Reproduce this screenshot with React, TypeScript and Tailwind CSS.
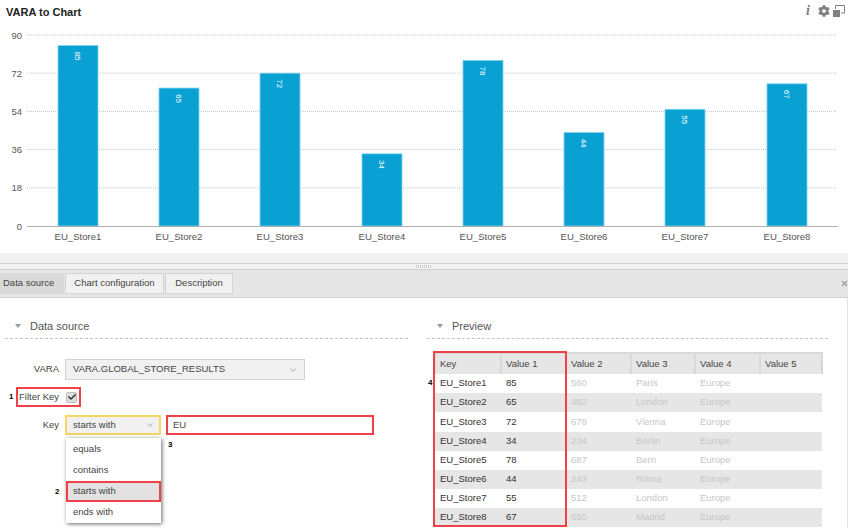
import React from 'react';
import { FaCog, FaCheck } from 'react-icons/fa';
import { ChevronDown, X } from 'lucide-react';

const bars = [
  { key: 'EU_Store1', value: 85, x: 58 },
  { key: 'EU_Store2', value: 65, x: 159 },
  { key: 'EU_Store3', value: 72, x: 260 },
  { key: 'EU_Store4', value: 34, x: 362 },
  { key: 'EU_Store5', value: 78, x: 463 },
  { key: 'EU_Store6', value: 44, x: 564 },
  { key: 'EU_Store7', value: 55, x: 665 },
  { key: 'EU_Store8', value: 67, x: 767 },
];

const rows = [
  ['EU_Store1', '85', '560', 'Paris', 'Europe'],
  ['EU_Store2', '65', '482', 'London', 'Europe'],
  ['EU_Store3', '72', '678', 'Vienna', 'Europe'],
  ['EU_Store4', '34', '234', 'Berlin', 'Europe'],
  ['EU_Store5', '78', '687', 'Bern', 'Europe'],
  ['EU_Store6', '44', '243', 'Roma', 'Europe'],
  ['EU_Store7', '55', '512', 'London', 'Europe'],
  ['EU_Store8', '67', '650', 'Madrid', 'Europe'],
];

const headers = ['Key', 'Value 1', 'Value 2', 'Value 3', 'Value 4', 'Value 5'];
const colWidths = ['w-[66px]', 'w-[65px]', 'w-[65px]', 'w-[64px]', 'w-[65px]', 'w-[62px]'];

function BarChart() {
  const y0 = 226;
  const scale = 191 / 90;
  return (
    <svg width="848" height="226" viewBox="0 27 848 226" className="block">
      {[90, 72, 54, 36, 18].map((t) => (
        <line key={t} x1="27" x2="837" y1={y0 - t * scale} y2={y0 - t * scale} stroke="#c8c8c8" strokeDasharray="1 1" />
      ))}
      {[90, 72, 54, 36, 18, 0].map((t) => (
        <text key={t} x="22" y={y0 - t * scale + 3.5} textAnchor="end" fontSize="9.5" fill="#555">
          {t}
        </text>
      ))}
      {bars.map((b) => {
        const top = y0 - b.value * scale;
        return (
          <g key={b.key}>
            <rect x={b.x} y={top} width="40" height={y0 - top} fill="#09a0d3" stroke="#7fd3ef" strokeWidth="0.8" />
            <text
              transform={`translate(${b.x + 17} ${top + 10.5}) rotate(90)`}
              textAnchor="middle"
              fontSize="8"
              fill="#ffffff"
            >
              {b.value}
            </text>
            <text x={b.x + 20} y="240" textAnchor="middle" fontSize="9.6" fill="#555">
              {b.key}
            </text>
          </g>
        );
      })}
      <line x1="27" x2="838" y1={y0 + 0.5} y2={y0 + 0.5} stroke="#b0b0b0" />
    </svg>
  );
}

function SectionHeader({ title }: { title: string }) {
  return (
    <div className="flex h-[24px] items-center gap-[9px] border-b border-dashed border-[#c4c4c4] pl-[10px] pb-[1px]">
      <svg width="6" height="4" viewBox="0 0 6 4">
        <path d="M0 0h6L3 4z" fill="#999" />
      </svg>
      <span className="text-[11px] text-[#555]">{title}</span>
    </div>
  );
}

function Annotation({ n, className }: { n: string; className: string }) {
  return <span className={`absolute text-[8px] font-bold text-black ${className}`}>{n}</span>;
}

export default function App() {
  return (
    <div className="relative h-[528px] w-[848px] overflow-hidden bg-white font-['Liberation_Sans',Arial,sans-serif] text-[9.5px] text-[#444]">
      {/* Chart panel */}
      <div className="h-[253px]">
        <div className="flex h-[27px] items-start justify-between pt-[5px] pl-[6px] pr-[3px]">
          <h1 className="text-[11px] font-bold leading-[14px] text-[#222]">VARA to Chart</h1>
          <div className="flex items-center text-[#808080]">
            <span className="mr-[8px] font-['Liberation_Serif',serif] text-[14px] font-bold italic leading-[12px]">i</span>
            <FaCog size={12} className="mr-[3px]" />
            <svg width="12" height="12" viewBox="0 0 12 12">
              <rect x="0" y="5" width="7" height="7" fill="#808080" />
              <path d="M2.5 4V0.5h9V8H8" fill="none" stroke="#808080" />
            </svg>
          </div>
        </div>
        <BarChart />
      </div>

      {/* Splitter */}
      <div className="h-[10px] bg-[#f1f1f1]" />
      <div className="flex h-[7px] items-center justify-center border-y border-[#cfcfcf] bg-[#f3f3f3]">
        <div className="h-[3px] w-[16px] bg-[repeating-linear-gradient(90deg,#cdcdcd_0,#cdcdcd_1px,transparent_1px,transparent_2px)]" />
      </div>

      {/* Tabs */}
      <div className="flex h-[28px] items-center justify-between border-b border-[#cfcfcf] bg-[#e6e6e6]">
        <div className="flex h-[21px] gap-[1px] self-center">
          <div className="flex w-[64px] items-center pl-[3px] bg-[#d9d9d9] text-[#444]">Data source</div>
          <div className="flex w-[99px] items-center justify-center border border-[#d4d4d4] bg-[#f1f1f1]">Chart configuration</div>
          <div className="flex w-[68px] items-center justify-center border border-[#d4d4d4] bg-[#f1f1f1]">Description</div>
        </div>
        <X size={9} strokeWidth={3} className="mr-[-1px] text-[#999]" />
      </div>

      {/* Content */}
      <div className="flex h-[230px] border-r border-[#e4e4e4]">
        <div className="relative w-[427px] pt-[17px] pl-[5px] pr-[19px]">
          <SectionHeader title="Data source" />
          <div className="mt-[20px] flex items-center">
            <span className="w-[60px] pr-[6px] text-right">VARA</span>
            <div className="flex h-[21px] w-[240px] items-center justify-between border border-[#d2d2d2] bg-[#f1f1f1] pl-[7px] pr-[6px]">
              VARA.GLOBAL_STORE_RESULTS
              <ChevronDown size={10} className="text-[#999]" />
            </div>
          </div>
          <div className="mt-[7px] ml-[11px] flex h-[20px] w-[65px] items-center border-2 border-[#f04048] pl-[1px]">
            Filter Key
            <span className="ml-[7px] flex h-[11px] w-[11px] items-center justify-center rounded-[2px] border border-[#bcbcbc] bg-[#dedede]">
              <FaCheck size={8} className="text-[#333]" />
            </span>
          </div>
          <div className="mt-[8px] flex items-center">
            <span className="w-[60px] pr-[6px] text-right">Key</span>
            <div className="flex h-[20px] w-[96px] items-center justify-between border-2 border-[#f5d565] bg-[#f1f1f1] pl-[6px] pr-[4px]">
              starts with
              <ChevronDown size={10} className="text-[#999]" />
            </div>
            <div className="ml-[5px] flex h-[20px] w-[208px] items-center border-2 border-[#f04048] pl-[5px]">EU</div>
          </div>

          {/* Open dropdown */}
          <div className="absolute left-[66px] top-[140px] w-[95px] bg-white py-[1px] shadow-[1px_1px_4px_rgba(0,0,0,0.6)]">
            <div className="flex h-[21px] items-center pl-[7px]">equals</div>
            <div className="flex h-[21px] items-center pl-[7px]">contains</div>
            <div className="flex h-[21px] items-center border-2 border-[#f04048] bg-[#e2e2e2] pl-[5px]">starts with</div>
            <div className="flex h-[20px] items-center pl-[7px]">ends with</div>
          </div>

          <Annotation n="1" className="left-[9px] top-[93px]" />
          <Annotation n="2" className="left-[55px] top-[188px]" />
          <Annotation n="3" className="left-[168px] top-[141px]" />
        </div>

        <div className="relative flex-1 pt-[17px] pr-[19px]">
          <SectionHeader title="Preview" />
          <table className="mt-[13px] ml-[7px] w-[387px] table-fixed border-collapse">
            <thead>
              <tr className="h-[21px] bg-[#e6e6e6]">
                {headers.map((h, i) => (
                  <th key={h} className={`${colWidths[i]} border-x-2 border-t-2 border-[#d8d8d8] pl-[4px] text-left font-normal`}>
                    {h}
                  </th>
                ))}
              </tr>
            </thead>
            <tbody>
              {rows.map((r, i) => (
                <tr key={r[0]} className={`${i === 2 ? 'h-[20px]' : 'h-[19px]'} ${i % 2 ? 'bg-[#e6e6e6]' : 'bg-white'}`}>
                  {r.map((c, j) => (
                    <td key={j} className={`pl-[5px] ${j < 2 ? 'text-[#333]' : 'text-[#c6c6c6]'}`}>
                      {c}
                    </td>
                  ))}
                  <td />
                </tr>
              ))}
            </tbody>
          </table>
          <div className="absolute left-[6px] top-[53px] h-[176px] w-[134px] border-2 border-[#f04048]" />
          <Annotation n="4" className="left-[1px] top-[79px]" />
        </div>
      </div>
    </div>
  );
}
